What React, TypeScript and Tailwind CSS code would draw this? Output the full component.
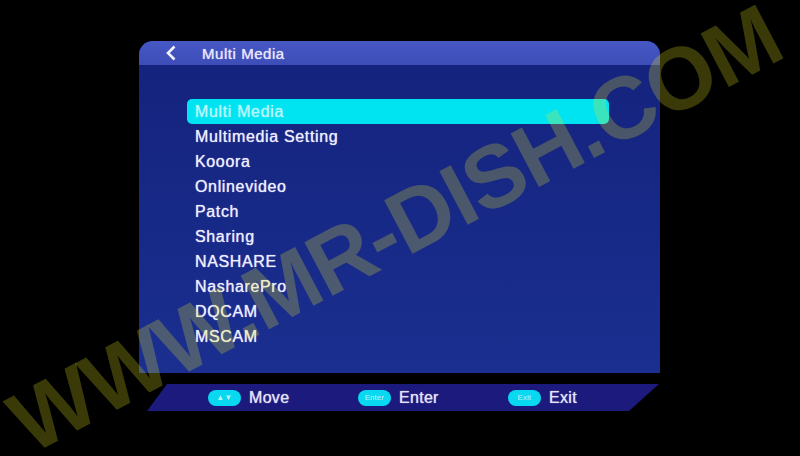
// Multi Media menu - set top box screen
const items = ['Multi Media', 'Multimedia Setting', 'Kooora', 'Onlinevideo', 'Patch', 'Sharing', 'NASHARE', 'NasharePro', 'DQCAM', 'MSCAM'];

function Hint({ keyLabel, label, width }: { keyLabel: string; label: string; width: string }) {
  return (
    <div className={`flex items-center gap-[8px] ${width}`}>
      <span className="flex h-[16px] w-[33px] items-center justify-center rounded-full bg-[#08d8f0] text-[8px] leading-none text-[#b8f4fc] blur-[0.3px]">
        {keyLabel}
      </span>
      <span className="text-[16px] leading-none tracking-[0.3px] text-[#e4e2f6] [text-shadow:0_0_1px_#d8d8ff]">{label}</span>
    </div>
  );
}

export default function App() {
  return (
    <div className="relative h-[456px] w-[800px] overflow-hidden bg-black pt-[41px] pl-[139px] font-['Liberation_Sans',sans-serif]">
      {/* Menu panel */}
      <div className="flex h-[332px] w-[521px] flex-col overflow-hidden rounded-t-[14px] bg-gradient-to-b from-[#14227c] to-[#1a2f90]">
        <header className="flex h-[24px] items-center bg-gradient-to-b from-[#4658c4] to-[#3d4db8] text-[#e8e8fa]">
          <svg width="12" height="16" viewBox="0 0 12 16" className="ml-[26px]" fill="none" stroke="#f2f2ff" strokeWidth="2.6">
            <path d="M9.5 1.5 3 8l6.5 6.5" />
          </svg>
          <h1 className="ml-[25px] text-[15px] leading-none tracking-[0.55px] [text-shadow:0_0_1px_#d8d8ff]">Multi Media</h1>
        </header>

        <ul className="mt-[34px] ml-[48px] w-[422px]">
          {items.map((item, index) => (
            <li
              key={item}
              className={`flex h-[25px] items-center pl-[8px] text-[16px] leading-none tracking-[0.65px] ${
                index === 0
                  ? 'rounded-[5px] bg-[#00e4f2] text-[#b4f6fa] [text-shadow:0_0_1px_#b4f6fa]'
                  : 'text-[#eeeeff] [text-shadow:0_0_1px_#d8d8ff]'
              }`}
            >
              {item}
            </li>
          ))}
        </ul>
      </div>

      {/* Key hints */}
      <footer className="mt-[11px] ml-[8px] flex h-[27px] w-[512px] items-center bg-[#1c1a7c] pl-[61px] [clip-path:polygon(20px_0,100%_0,calc(100%-30px)_100%,0_100%)]">
        <Hint keyLabel="▲▼" label="Move" width="w-[150px]" />
        <Hint keyLabel="Enter" label="Enter" width="w-[150px]" />
        <Hint keyLabel="Exit" label="Exit" width="w-[100px]" />
      </footer>

      {/* Watermark */}
      <div className="pointer-events-none absolute top-[229px] left-[395px] -translate-x-1/2 -translate-y-1/2 -rotate-[27.8deg] text-[88px] leading-none font-bold tracking-[-1.3px] whitespace-nowrap text-[#e6e61e]/25">
        WWW.MR-DISH.COM
      </div>
    </div>
  );
}
